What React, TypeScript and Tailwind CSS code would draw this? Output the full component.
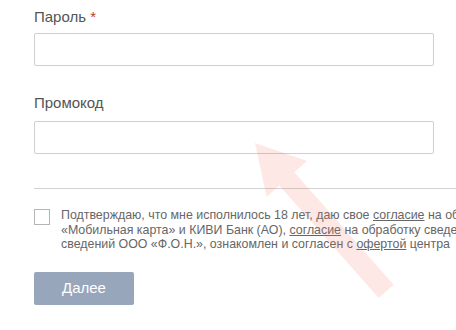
import React from 'react';

const font = { fontFamily: '"Liberation Sans", Arial, sans-serif' };

export default function App() {
  return (
    <div className="relative w-[456px] h-[330px] overflow-hidden bg-white" style={font}>
      <div className="pt-[7px] pl-[34px]">
        {/* Password */}
        <div className="h-5 leading-5 text-[15px] text-[#555]">
          Пароль <span className="text-[#c0392b]">*</span>
        </div>
        <input
          type="password"
          className="mt-[6px] block h-[33px] w-[400px] rounded-[2px] border border-[#cfcfcf] bg-white outline-none"
        />

        {/* Promo code */}
        <div className="mt-[27px] h-5 leading-5 text-[15px] text-[#555]">Промокод</div>
        <input
          type="text"
          className="mt-[8px] block h-[33px] w-[400px] rounded-[2px] border border-[#cfcfcf] bg-white outline-none"
        />

        <div className="mt-[34px] h-px w-[600px] bg-[#d2d2d2]" />

        {/* Agreement */}
        <div className="mt-[19px] flex items-start gap-[11px]">
          <div className="mt-[1px] h-4 w-4 shrink-0 border border-[#b5b5b5] bg-white" />
          <div className="whitespace-nowrap text-[12.4px] leading-[14.5px] text-[#666]">
            <div>
              Подтверждаю, что мне исполнилось 18 лет, даю свое <span className="underline">согласие</span> на обработку персональных данных ООО
            </div>
            <div>
              «Мобильная карта» и КИВИ Банк (АО), <span className="underline">согласие</span> на обработку сведений о себе и на получение
            </div>
            <div>
              сведений ООО «Ф.О.Н.», ознакомлен и согласен с <span className="underline">офертой</span> центра
            </div>
          </div>
        </div>

        <button className="mt-[20px] block h-[33px] w-[100px] rounded-[2px] bg-[#98a6bb] text-[15px] text-white">
          Далее
        </button>
      </div>

      {/* Arrow overlay */}
      <svg className="pointer-events-none absolute left-0 top-0" width="456" height="330">
        <g transform="translate(255 143) rotate(-131.5)" opacity="0.16">
          <polygon
            points="0,0 -48,-27 -48,-10 -198,-10 -198,10 -48,10 -48,27"
            fill="#f5705f"
          />
        </g>
      </svg>
    </div>
  );
}
